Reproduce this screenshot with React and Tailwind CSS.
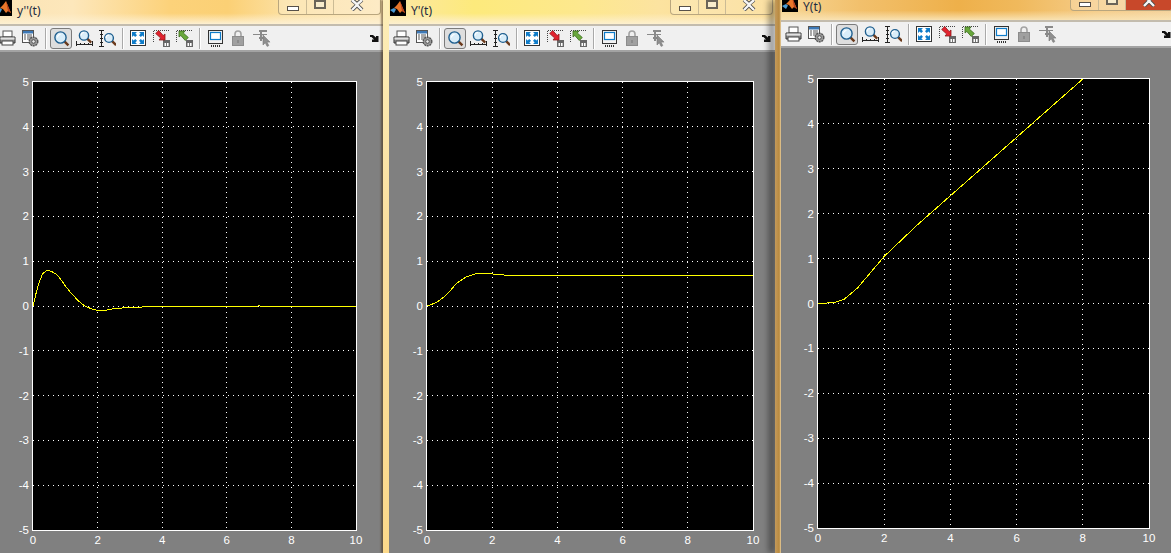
const W1 = [[0,0],[.1,.3],[.2,.55],[.3,.72],[.4,.78],[.5,.79],[.6,.76],[.7,.72],[.8,.65],[.9,.55],[1,.45],[1.2,.27],[1.4,.12],[1.6,0],[1.8,-.06],[2,-.1],[2.2,-.1],[2.5,-.06],[3,-.03],[3.5,-.02],[4,0],[5,0],[6,-.01],[7,0],[8,-.01],[9,-.01],[10,-.01]];
const W2 = [[0,0],[.3,.08],[.6,.25],[.9,.5],[1.2,.65],[1.5,.72],[1.8,.73],[2.2,.7],[2.6,.68],[3,.67],[10,.67]];
const W3 = [[0,0],[.5,.02],[.8,.1],[1.2,.35],[1.6,.7],[2,1.05],[2.5,1.4],[3,1.75],[4,2.4],[5,3.05],[6,3.7],[7,4.35],[8,5]];

function Plot({ left, top, width, height, data, svgW, svgH }) {
  const X = (t) => left + (t / 10) * width;
  const Y = (v) => top + ((5 - v) / 10) * height;
  const xs = [0, 2, 4, 6, 8, 10];
  const ys = [5, 4, 3, 2, 1, 0, -1, -2, -3, -4, -5];
  return (
    <svg width={svgW} height={svgH} className="block" style={{ fontFamily: '"Liberation Sans", Arial, sans-serif' }}>
      <rect x={left} y={top} width={width} height={height} fill="#000" />
      <g stroke="#fff" shapeRendering="crispEdges" strokeDasharray="1 4">
        {xs.slice(1, -1).map((t) => <line key={t} x1={X(t)} x2={X(t)} y1={top} y2={top + height} />)}
        {ys.slice(1, -1).map((v) => <line key={v} x1={left} x2={left + width} y1={Y(v)} y2={Y(v)} />)}
      </g>
      <polyline fill="none" stroke="#ffff00" strokeWidth="1" shapeRendering="crispEdges" points={data.map(([t, v]) => `${X(t)},${Y(v)}`).join(" ")} />
      <rect x={left - 0.5} y={top - 0.5} width={width + 1} height={height + 1} fill="none" stroke="#fff" shapeRendering="crispEdges" />
      <g fill="#fff" fontSize="11.5">
        {ys.map((v) => <text key={v} x={left - 4} y={Y(v) + 4} textAnchor="end">{v}</text>)}
        {xs.map((t) => <text key={t} x={X(t)} y={top + height + 14} textAnchor="middle">{t}</text>)}
      </g>
    </svg>
  );
}

const Sep = ({ ml }) => <div className={`h-[21px] w-[2px] shrink-0 bg-[#a9a9a9] border-r border-white ${ml}`} />;

const Glass = ({ cx = 8, cy = 7, r = 5 }) => (
  <>
    <line x1={cx + r * 0.7} y1={cy + r * 0.7} x2={cx + r * 0.7 + 4} y2={cy + r * 0.7 + 4} stroke="#6b3a1c" strokeWidth="2.4" />
    <circle cx={cx} cy={cy} r={r} fill="#d9edf9" stroke="#1f5f8f" strokeWidth="1.4" />
    <path d={`M${cx - 3} ${cy} a3 3 0 0 1 3 -3`} fill="none" stroke="#fff" strokeWidth="1.2" />
  </>
);

const Printer = () => (
  <svg width="17" height="16" viewBox="0 0 17 16">
    <rect x="4" y="1" width="9" height="6" fill="#fff" stroke="#555" />
    <path d="M1 7h15v6H1z" fill="#9a9a9a" stroke="#333" />
    <rect x="1.5" y="7.5" width="14" height="2" fill="#e2e2e2" />
    <rect x="3" y="11" width="11" height="4" fill="#fff" stroke="#444" />
  </svg>
);
const Props = () => (
  <svg width="17" height="17" viewBox="0 0 17 17">
    <rect x="0.5" y="0.5" width="11" height="12" fill="#fff" stroke="#555" />
    <rect x="1" y="1" width="10" height="2.5" fill="#3d78b5" />
    <path d="M2 5h2M5 5h5M2 7h2M5 7h5M2 9h2M5 9h3" stroke="#555" />
    <circle cx="11.5" cy="11.5" r="4.3" fill="#9a9a9a" stroke="#555" strokeWidth="1.4" strokeDasharray="2 0.7" />
    <circle cx="11.5" cy="11.5" r="1.8" fill="#e8e8e8" stroke="#555" />
  </svg>
);
const ZoomX = () => (
  <svg width="17" height="17" viewBox="0 0 17 17">
    <Glass cx={8} cy={5.5} r={4.6} />
    <path d="M0.5 11v5M16.5 11v5M0.5 14.5h16M4 13v2M8 13v2M12 13v2" stroke="#222" fill="none" shapeRendering="crispEdges" />
  </svg>
);
const ZoomY = () => (
  <svg width="17" height="17" viewBox="0 0 17 17">
    <path d="M0 0.5h5M0 16.5h5M2.5 0.5v16M1 4.5h3M1 8.5h3M1 12.5h3" stroke="#222" fill="none" shapeRendering="crispEdges" />
    <Glass cx={10} cy={8} r={4.4} />
  </svg>
);
const Fit = () => (
  <svg width="16" height="16" viewBox="0 0 16 16">
    <rect x="0.5" y="0.5" width="15" height="15" fill="#fff" stroke="#333" />
    <g fill="#0f7cc9">
      <path d="M2 2h5L5.4 3.6 7 5.2 5.2 7 3.6 5.4 2 7z" />
      <path d="M14 2v5l-1.6-1.6L10.8 7 9 5.2l1.6-1.6L9 2z" />
      <path d="M2 14V9l1.6 1.6L5.2 9 7 10.8l-1.6 1.6L7 14z" />
      <path d="M14 14H9l1.6-1.6L9 10.8 10.8 9l1.6 1.6L14 9z" />
    </g>
  </svg>
);
const Restore = ({ fill, edge, flip }) => (
  <svg width="17" height="17" viewBox="0 0 17 17">
    <path d="M0.5 0.5h16M0.5 0.5v12" stroke="#444" strokeDasharray="1 1" fill="none" shapeRendering="crispEdges" />
    <rect x="10" y="10" width="7" height="7" fill="#666" />
    <rect x="11.5" y="13" width="1.6" height="3" fill="#fff" /><rect x="14" y="13" width="1.6" height="3" fill="#fff" />
    {flip
      ? <path d="M3 1h6l-1.7 2 5 4.5-3 3-4.5-5L3 7z" fill={fill} stroke={edge} strokeWidth="0.8" />
      : <path d="M11 10H5l1.7-2-5-4.5 3-3 4.5 5L11 4z" transform="translate(1 0)" fill={fill} stroke={edge} strokeWidth="0.8" />}
  </svg>
);
const Scope = () => (
  <svg width="15" height="17" viewBox="0 0 15 17">
    <rect x="0.5" y="0.5" width="14" height="13" fill="#f2f2f2" stroke="#333" />
    <rect x="2.5" y="2.5" width="10" height="7" fill="#fff" stroke="#0f7cc9" strokeWidth="1.2" />
    <path d="M3 14.5v2M5 14.5v2M7 14.5v2M9 14.5v2M11 14.5v2" stroke="#333" shapeRendering="crispEdges" />
  </svg>
);
const Lock = () => (
  <svg width="12" height="16" viewBox="0 0 12 16">
    <path d="M3 7V4a3 3 0 0 1 6 0v3" fill="none" stroke="#a3a3a3" strokeWidth="1.6" />
    <rect x="0.5" y="6.5" width="11" height="9" fill="#a0a0a0" stroke="#8c8c8c" />
    <rect x="5.5" y="10" width="1" height="3" fill="#777" />
  </svg>
);
const CursorTool = () => (
  <svg width="18" height="17" viewBox="0 0 18 17">
    <path d="M0 4.5h14M6 1h8M6 8h6M8 1v10" stroke="#8a8a8a" strokeWidth="1.6" fill="none" shapeRendering="crispEdges" />
    <path d="M10 5v10l2.3-2.2 1.8 3.6 1.7-.8-1.8-3.5H17z" fill="#8f8f8f" stroke="#777" strokeWidth="0.6" />
  </svg>
);
const Chevron = () => (
  <svg width="9" height="8" viewBox="0 0 9 8">
    <path d="M0 1h3l3 2.5V2h2.5v6H2V5.5h2L1.5 3H0z" fill="#111" />
  </svg>
);
const MatlabIcon = () => (
  <svg width="16" height="16" viewBox="0 0 16 16" className="shrink-0">
    <rect width="16" height="16" fill="#000" />
    <path d="M0 10l4-2 2 1.5L4 13z" fill="#4a9bd4" />
    <path d="M4 8l3-3 3-4 2 5 3 7-3-2-2 2-3-4z" fill="#e8762a" />
    <path d="M10 1l2 5 3 7-3-2-1-5z" fill="#b9421e" />
  </svg>
);
const CloseX = () => (
  <svg width="16" height="11" viewBox="0 0 16 11">
    <path d="M3 0l5 4 5-4M3 10l5-5 5 5M8 4.5v0" fill="none" stroke="#4b4b4b" strokeWidth="4" />
    <path d="M3 0l5 4.5L13 0M3 10l5-5 5 5" fill="none" stroke="#f6f6f6" strokeWidth="2.4" />
  </svg>
);

function Title({ text, bg, closeBg, tx }) {
  return (
    <div className={`flex h-6 w-full shrink-0 items-start pl-[1px] ${bg}`}>
      <MatlabIcon />
      <span className={`mt-[3px] text-[12px] leading-4 text-[#1d2c42] ${tx}`} style={{ fontFamily: '"Noto Sans", sans-serif' }}>{text}</span>
      <div className="ml-auto mr-[2px] flex h-[15px] w-[103px] shrink-0 overflow-hidden rounded-bl-[4px] rounded-br-[4px] border border-t-0 border-[#b9a67e] bg-[#ffffff33]">
        <div className="flex w-[28px] items-center justify-center border-r border-[#cbbb95]"><div className="mt-[3px] h-[5px] w-[12px] border border-[#57514a] bg-white" /></div>
        <div className="flex w-[27px] justify-center border-r border-[#cbbb95]"><div className="h-[9px] w-[12px] border-2 border-[#6a6459] bg-[#f8eccc]" /></div>
        <div className={`flex flex-1 justify-center ${closeBg}`}><CloseX /></div>
      </div>
    </div>
  );
}

function Toolbar() {
  return (
    <div className="flex h-[28px] w-full shrink-0 items-center border-y-2 border-t-[#c3bcae] border-b-[#a3a3a3] bg-[#f0f0f0] pl-[4px]">
      <Printer />
      <div className="ml-[6px]"><Props /></div>
      <Sep ml="ml-[6px]" />
      <div className="ml-[3px] flex h-[21px] w-[22px] shrink-0 items-center justify-center rounded-[3px] border border-[#7b7b7b] bg-[#dedede]">
        <svg width="17" height="17" viewBox="0 0 17 17"><Glass cx={7.5} cy={7.5} r={5.6} /></svg>
      </div>
      <div className="ml-[4px]"><ZoomX /></div>
      <div className="ml-[6px]"><ZoomY /></div>
      <Sep ml="ml-[6px]" />
      <div className="ml-[6px]"><Fit /></div>
      <div className="ml-[7px]"><Restore fill="#e2222e" edge="#8c1a1a" /></div>
      <div className="ml-[6px]"><Restore fill="#69a83c" edge="#3a6b1d" flip /></div>
      <Sep ml="ml-[6px]" />
      <div className="ml-[7px]"><Scope /></div>
      <div className="ml-[9px]"><Lock /></div>
      <div className="ml-[9px]"><CursorTool /></div>
      <div className="ml-auto mr-[4px]"><Chevron /></div>
    </div>
  );
}

function Win({ cls, text, bg, closeBg = "", tx, plot, gw, gh }) {
  return (
    <div className={`flex shrink-0 flex-col ${cls}`}>
      <Title text={text} bg={bg} closeBg={closeBg} tx={tx} />
      <Toolbar />
      <div className="flex-1 bg-[#808080]">
        <Plot {...plot} svgW={gw} svgH={gh} />
      </div>
    </div>
  );
}

export default function App() {
  return (
    <div className="flex h-[553px] w-[1171px] items-start overflow-hidden bg-[#808080]">
      <Win
        cls="-ml-[5px] h-[553px] w-[388px]"
        text="y''(t)"
        tx="ml-[5px]"
        bg="bg-[linear-gradient(180deg,#fff0_55%,#fdf0d2_100%),linear-gradient(90deg,#fbe3b4_0%,#fde7bb_20%,#fcd27a_45%,#fbd075_60%,#fce0a2_75%,#fde6b8_100%)]"
        plot={{ left: 38, top: 30, width: 323, height: 448, data: W1 }}
        gw={388}
        gh={501}
      />
      <div className="relative z-10 h-[553px] w-[6px] shrink-0 bg-[linear-gradient(180deg,#fdeeb8_0%,#fbe0a0_40%,#fcd98a_100%)] shadow-[-2px_0_2px_rgba(70,50,20,0.55)]" />
      <Win
        cls="h-[553px] w-[386px]"
        text="Y'(t)"
        tx="ml-[5px]"
        bg="bg-[linear-gradient(180deg,#fff0_55%,#fdf0cf_100%),linear-gradient(90deg,#fbe7a5_0%,#fdea7c_22%,#fde88e_50%,#fce3a0_70%,#fbd98c_100%)]"
        plot={{ left: 38, top: 30, width: 326, height: 448, data: W2 }}
        gw={386}
        gh={501}
      />
      <div className="relative z-10 h-[553px] w-[6px] shrink-0 bg-[linear-gradient(90deg,#c39a5c_0%,#b98a3f_70%,#e8cf9f_100%)] shadow-[-6px_0_6px_rgba(0,0,0,0.45)]" />
      <Win
        cls="-mt-[4px] h-[557px] w-[394px]"
        text="Y(t)"
        tx="ml-[5px]"
        closeBg="bg-[#c8482a]"
        bg="bg-[linear-gradient(180deg,#fff0_60%,#f9e2b2_100%),linear-gradient(90deg,#f6d694_0%,#f2c06c_20%,#eeb04a_45%,#f0b95c_60%,#f5cc88_80%,#f3d19b_100%)]"
        plot={{ left: 37, top: 31, width: 331, height: 449, data: W3 }}
        gw={394}
        gh={505}
      />
    </div>
  );
}
